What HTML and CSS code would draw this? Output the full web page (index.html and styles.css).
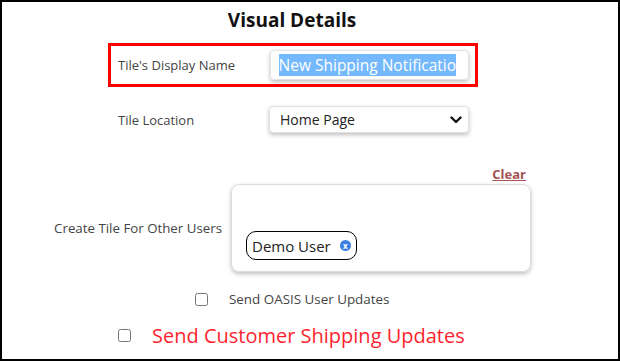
FILE: index.html
```html
<!DOCTYPE html>
<html lang="en">
<head>
    <meta charset="UTF-8">
    <meta name="viewport" content="width=device-width, initial-scale=1.0">
    <title>Visual Details</title>
<link rel="stylesheet" href="styles.css">
</head>
<body>
    <div class="panel">
        <div class="panel-title">Visual Details</div>

        <div class="field-row highlighted">
            <label class="field-label">Tile's Display Name</label>
            <div class="text-input"><span class="selected-text">New Shipping Notificatio</span></div>
        </div>

        <div class="field-row">
            <label class="field-label">Tile Location</label>
            <div class="select-wrap">
                <select class="select-input">
                    <option>Home Page</option>
                </select>
                <svg class="select-arrow" width="12" height="8" viewBox="0 0 12 8">
                    <path d="M1.5 1.5 L6 6 L10.5 1.5" fill="none" stroke="#111" stroke-width="2.4" stroke-linecap="round" stroke-linejoin="round"/>
                </svg>
            </div>
        </div>

        <div class="users-row">
            <label class="users-label">Create Tile For Other Users</label>
            <div class="users-column">
                <div class="clear-line"><a href="#" class="clear-link">Clear</a></div>
                <div class="users-box">
                    <div class="user-chip">
                        Demo User
                        <span class="chip-remove">x</span>
                    </div>
                </div>
            </div>
        </div>

        <div class="check-row oasis">
            <input type="checkbox" class="check-box">
            <span class="check-label">Send OASIS User Updates</span>
        </div>

        <div class="check-row customer">
            <input type="checkbox" class="check-box">
            <span class="check-label">Send Customer Shipping Updates</span>
        </div>
    </div>
</body>
</html>
```

FILE: styles.css
```css
* {
    margin: 0;
    padding: 0;
    box-sizing: border-box;
}
body {
    font-family: 'Open Sans', 'Liberation Sans', Arial, sans-serif;
    color: #333;
    background: #fff;
}
.panel {
    width: 620px;
    height: 361px;
    border: 2px solid #000;
    overflow: hidden;
}
.panel-title {
    font-size: 19px;
    font-weight: 700;
    color: #111;
    text-align: center;
    line-height: 24px;
    padding-top: 6px;
    margin-left: -36px;
}
.field-row {
    display: flex;
    align-items: center;
    width: 370px;
    margin-left: 106px;
    border: 3px solid transparent;
    padding: 4px 6px 4px 7px;
    margin-top: 12px;
}
.field-row.highlighted {
    border-color: #ff0000;
    margin-top: 11px;
}
.field-label {
    width: 152px;
    font-size: 13px;
    color: #444;
}
.text-input {
    width: 200px;
    height: 30px;
    border: 1px solid #e2e2e2;
    border-radius: 4px;
    box-shadow: 0 2px 4px rgba(0, 0, 0, 0.25);
    padding: 3px 8px 0 8px;
    white-space: nowrap;
    font-size: 15.5px;
    line-height: 22px;
}
.selected-text {
    background: #74b9fd;
    color: #fff;
}
.select-wrap {
    position: relative;
    width: 200px;
}
.select-input {
    appearance: none;
    width: 200px;
    height: 27px;
    border: 1px solid #e2e2e2;
    border-radius: 4px;
    box-shadow: 0 2px 4px rgba(0, 0, 0, 0.25);
    background: #fff;
    padding: 0 10px;
    font-family: inherit;
    font-size: 14px;
    color: #222;
}
.select-arrow {
    position: absolute;
    right: 7px;
    top: 10px;
}
.users-row {
    display: flex;
    margin-top: 25px;
    margin-left: 38px;
}
.users-label {
    width: 182px;
    height: 88px;
    align-self: flex-end;
    display: flex;
    align-items: center;
    justify-content: flex-end;
    font-size: 13.3px;
    color: #444;
}
.users-column {
    margin-left: 9px;
    width: 300px;
}
.clear-line {
    text-align: right;
    padding-right: 5px;
    line-height: 16px;
    margin-bottom: 2px;
}
.clear-link {
    font-size: 13px;
    font-weight: 700;
    color: #a65252;
}
.users-box {
    height: 88px;
    border: 1px solid #dcdcdc;
    border-radius: 8px;
    box-shadow: 0 2px 4px rgba(0, 0, 0, 0.25);
    display: flex;
    align-items: flex-end;
    padding: 0 14px 11px;
}
.user-chip {
    display: flex;
    align-items: center;
    height: 29px;
    border: 1px solid #000;
    border-radius: 10px;
    padding: 0 5px 0 5px;
    font-size: 15px;
    color: #222;
}
.chip-remove {
    display: inline-flex;
    align-items: center;
    justify-content: center;
    width: 11px;
    height: 11px;
    border-radius: 50%;
    background: #3d7fe0;
    color: #fff;
    font-size: 8px;
    font-weight: 700;
    line-height: 1;
    margin-left: 9px;
}
.check-row {
    display: flex;
    align-items: center;
}
.check-box {
    width: 13px;
    height: 13px;
}
.check-row.oasis {
    margin-top: 17px;
    margin-left: 193px;
    height: 20px;
}
.check-row.oasis .check-label {
    margin-left: 21px;
    font-size: 13.4px;
    color: #444;
}
.check-row.customer {
    margin-top: 14px;
    margin-left: 116px;
    height: 24px;
}
.check-row.customer .check-label {
    margin-left: 21px;
    font-size: 20px;
    color: #ff1f2f;
}
```
